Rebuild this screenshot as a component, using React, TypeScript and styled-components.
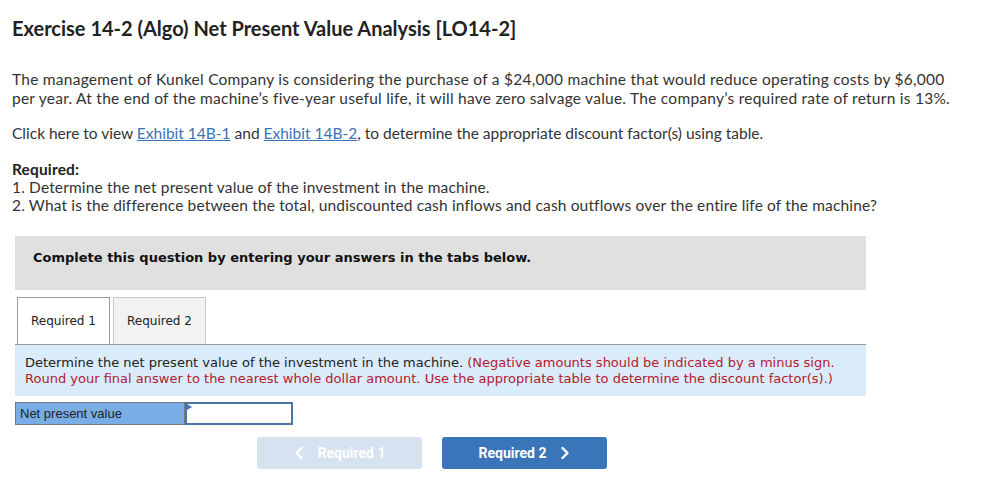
import styled, { createGlobalStyle } from "styled-components";

const GlobalStyle = createGlobalStyle`
  body {
    margin: 0;
    background: #fff;
    color: #333;
    font-family: Lato, "Open Sans", Arial, sans-serif;
  }
`;

const App = () => {
  return (
    <Page>
      <GlobalStyle />
      <Title>Exercise 14-2 (Algo) Net Present Value Analysis [LO14-2]</Title>

      <Paragraph>
        The management of Kunkel Company is considering the purchase of a
        $24,000 machine that would reduce operating costs by $6,000 per year.
        At the end of the machine’s five-year useful life, it will have zero
        salvage value. The company’s required rate of return is 13%.
      </Paragraph>

      <ExhibitLine>
        Click here to view <ExhibitLink href="#">Exhibit 14B-1</ExhibitLink> and{" "}
        <ExhibitLink href="#">Exhibit 14B-2</ExhibitLink>, to determine the
        appropriate discount factor(s) using table.
      </ExhibitLine>

      <RequiredBlock>
        <RequiredHead>Required:</RequiredHead>
        <div>1. Determine the net present value of the investment in the machine.</div>
        <div>
          2. What is the difference between the total, undiscounted cash inflows
          and cash outflows over the entire life of the machine?
        </div>
      </RequiredBlock>

      <Instruction>Complete this question by entering your answers in the tabs below.</Instruction>

      <Tabs>
        <Tab $active>Required 1</Tab>
        <Tab>Required 2</Tab>
      </Tabs>

      <InfoBox>
        <p>
          Determine the net present value of the investment in the machine.{" "}
          <Hint>(Negative amounts should be indicated by a minus sign.</Hint>
        </p>
        <Hint as="p">
          Round your final answer to the nearest whole dollar amount. Use the
          appropriate table to determine the discount factor(s).)
        </Hint>
      </InfoBox>

      <AnswerRow>
        <AnswerLabel>Net present value</AnswerLabel>
        <AnswerCell>
          <Flag />
          <AnswerInput type="text" />
        </AnswerCell>
      </AnswerRow>

      <NavRow>
        <NavButton $disabled>
          <Chevron viewBox="0 0 10 14">
            <path d="M7.5 2 L2.5 7 L7.5 12" />
          </Chevron>
          Required 1
        </NavButton>
        <NavButton>
          Required 2
          <Chevron viewBox="0 0 10 14">
            <path d="M2.5 2 L7.5 7 L2.5 12" />
          </Chevron>
        </NavButton>
      </NavRow>
    </Page>
  );
};

const Page = styled.div`
  padding: 16px 12px 20px;
  width: 960px;
  box-sizing: border-box;
`;

const Title = styled.h1`
  margin: 0;
  font-size: 20px;
  line-height: 24px;
  font-weight: 700;
  color: #222;
`;

const Paragraph = styled.p`
  margin: 30px 0 0;
  font-size: 15.5px;
  letter-spacing: 0.25px;
  line-height: 19px;
  width: 945px;
  color: #333;
`;

const ExhibitLine = styled.p`
  margin: 16px 0 0;
  font-size: 15.5px;
  line-height: 19px;
`;

const ExhibitLink = styled.a`
  color: #3b73b9;
  text-decoration: underline;
`;

const RequiredBlock = styled.div`
  margin-top: 17px;
  font-size: 15.5px;
  letter-spacing: 0.15px;
  line-height: 18px;
`;

const RequiredHead = styled.div`
  font-weight: 700;
  color: #222;
`;

const Instruction = styled.div`
  margin: 22px 0 0 3px;
  width: 851px;
  height: 54px;
  box-sizing: border-box;
  padding: 14px 18px 0;
  background: #e0e0e0;
  font-family: Verdana, "DejaVu Sans", sans-serif;
  font-size: 13px;
  line-height: 16px;
  font-weight: 700;
  color: #111;
`;

const Tabs = styled.div`
  display: flex;
  gap: 3px;
  margin: 7px 0 0 5px;
`;

const Tab = styled.div<{ $active?: boolean }>`
  width: 93px;
  height: 47px;
  box-sizing: border-box;
  display: flex;
  align-items: center;
  justify-content: center;
  border: 1px solid ${(p) => (p.$active ? "#9a9a9a" : "#c8c8c8")};
  border-bottom: none;
  background: ${(p) => (p.$active ? "#fff" : "#f2f2f2")};
  font-family: Verdana, "DejaVu Sans", sans-serif;
  font-size: 12px;
  color: #222;
`;

const InfoBox = styled.div`
  margin-left: 3px;
  width: 851px;
  box-sizing: border-box;
  border-top: 1px solid #999;
  background: #daebf9;
  padding: 10px 10px 9px;
  font-family: Verdana, "DejaVu Sans", sans-serif;
  font-size: 13px;
  line-height: 16px;
  color: #222;

  p {
    margin: 0;
  }
`;

const Hint = styled.span`
  color: #b3192f;
`;

const AnswerRow = styled.div`
  display: flex;
  margin: 6px 0 0 3px;
  height: 23px;
`;

const AnswerLabel = styled.div`
  width: 170px;
  box-sizing: border-box;
  border: 1px solid #777;
  background: #7aade5;
  padding-left: 4px;
  display: flex;
  align-items: center;
  font-family: Arial, "Liberation Sans", sans-serif;
  font-size: 13px;
  color: #222;
`;

const AnswerCell = styled.div`
  position: relative;
  width: 108px;
`;

const Flag = styled.span`
  position: absolute;
  left: 2px;
  top: 2px;
  width: 0;
  height: 0;
  border-top: 3px solid transparent;
  border-bottom: 3px solid transparent;
  border-left: 5px solid #3b73b9;
`;

const AnswerInput = styled.input`
  width: 100%;
  height: 100%;
  box-sizing: border-box;
  border: 2px solid #4d73a4;
  margin: 0;
  padding: 0 4px;
  background: #fff;
  outline: none;
`;

const NavRow = styled.div`
  display: flex;
  justify-content: center;
  gap: 20px;
  width: 851px;
  margin: 12px 0 0 3px;
  padding-right: 17px;
  box-sizing: border-box;
`;

const NavButton = styled.button<{ $disabled?: boolean }>`
  width: 165px;
  height: 32px;
  border: none;
  border-radius: 3px;
  display: flex;
  align-items: center;
  justify-content: center;
  gap: 14px;
  background: ${(p) => (p.$disabled ? "#d6e2ef" : "#3a74b9")};
  color: #fff;
  font-family: Roboto, Arial, sans-serif;
  font-size: 14px;
  font-weight: 700;
  cursor: ${(p) => (p.$disabled ? "default" : "pointer")};
`;

const Chevron = styled.svg`
  width: 10px;
  height: 14px;
  fill: none;
  stroke: #fff;
  stroke-width: 2.4;
  stroke-linecap: round;
  stroke-linejoin: round;
`;

export default App;
